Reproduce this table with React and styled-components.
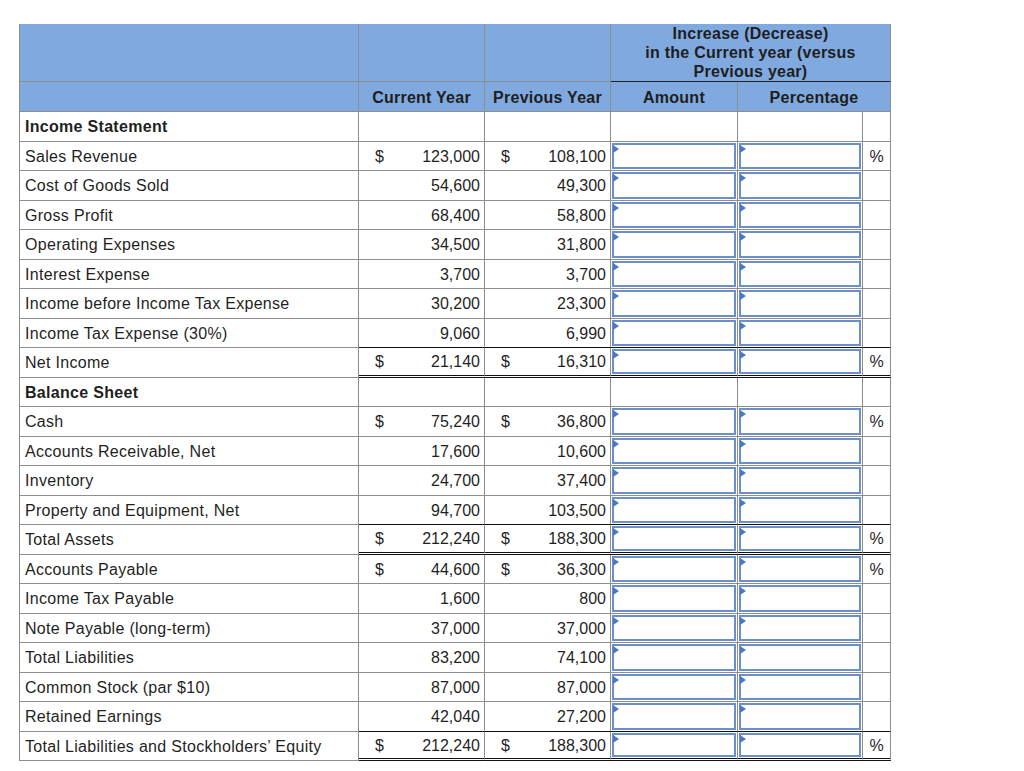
import React from "react";
import styled, { createGlobalStyle, css } from "styled-components";

const Global = createGlobalStyle`
  * { box-sizing: border-box; }
  html, body { margin: 0; padding: 0; background: #fff; }
  body { font-family: "Liberation Sans", Arial, Helvetica, sans-serif; color: #1f1f1f; }
`;

const COLS = "339px 126px 126px 127px 125px 28px";
const GRID = "#8e8e8e";
const HEAD = "#80aadf";
const BLUE = "#6a8fcb";

const Page = styled.div`
  padding: 24px 0 0 19px;
  width: 1024px;
  height: 771px;
`;

const Sheet = styled.div`
  width: 872px;
  border-left: 1px solid ${GRID};
`;

const Row = styled.div`
  display: grid;
  grid-template-columns: ${COLS};
  height: ${(p) => p.$h}px;
`;

const Cell = styled.div`
  border-right: 1px solid ${GRID};
  border-bottom: 1px solid ${GRID};
  display: flex;
  align-items: center;
  font-size: 16px;
  padding-top: 2px;
  min-width: 0;
  ${(p) => p.$span && css`grid-column: span ${p.$span};`}
  ${(p) =>
    p.$line === "single" &&
    css`
      border-bottom: 1px solid #111;
    `}
  ${(p) =>
    p.$line === "double" &&
    css`
      border-bottom: 3px double #111;
    `}
`;

const HeadCell = styled(Cell)`
  background: ${HEAD};
  font-weight: bold;
  justify-content: center;
  text-align: center;
  line-height: 19px;
  letter-spacing: 0.25px;
  color: #1e1e1e;
  ${(p) =>
    p.$dark &&
    css`
      border-bottom: 1px solid #222;
      padding-top: 0;
    `}
`;

const LabelCell = styled(Cell)`
  padding-left: 5px;
  font-weight: ${(p) => (p.$bold ? "bold" : "normal")};
  letter-spacing: 0.3px;
  white-space: nowrap;
`;

const MoneyCell = styled(Cell)`
  justify-content: space-between;
  padding: 2px 4px 0 16px;
`;

const InputCell = styled(Cell)`
  padding: 1px;
  align-items: stretch;
`;

const Box = styled.div`
  position: relative;
  flex: 1;
  border: 2px solid ${BLUE};
  background: #fff;
  &::before {
    content: "";
    position: absolute;
    left: -1px;
    top: 0;
    width: 0;
    height: 0;
    border-top: 4px solid transparent;
    border-bottom: 4px solid transparent;
    border-left: 6px solid #4a78c4;
  }
`;

const PctCell = styled(Cell)`
  justify-content: center;
`;

const rows = [
  { label: "Income Statement", section: true },
  { label: "Sales Revenue", cy: "123,000", py: "108,100", d: true },
  { label: "Cost of Goods Sold", cy: "54,600", py: "49,300" },
  { label: "Gross Profit", cy: "68,400", py: "58,800" },
  { label: "Operating Expenses", cy: "34,500", py: "31,800" },
  { label: "Interest Expense", cy: "3,700", py: "3,700" },
  { label: "Income before Income Tax Expense", cy: "30,200", py: "23,300" },
  { label: "Income Tax Expense (30%)", cy: "9,060", py: "6,990", line: "single" },
  { label: "Net Income", cy: "21,140", py: "16,310", d: true, line: "double" },
  { label: "Balance Sheet", section: true },
  { label: "Cash", cy: "75,240", py: "36,800", d: true },
  { label: "Accounts Receivable, Net", cy: "17,600", py: "10,600" },
  { label: "Inventory", cy: "24,700", py: "37,400" },
  { label: "Property and Equipment, Net", cy: "94,700", py: "103,500", line: "single" },
  { label: "Total Assets", cy: "212,240", py: "188,300", d: true, line: "double" },
  { label: "Accounts Payable", cy: "44,600", py: "36,300", d: true },
  { label: "Income Tax Payable", cy: "1,600", py: "800" },
  { label: "Note Payable (long-term)", cy: "37,000", py: "37,000" },
  { label: "Total Liabilities", cy: "83,200", py: "74,100" },
  { label: "Common Stock (par $10)", cy: "87,000", py: "87,000" },
  { label: "Retained Earnings", cy: "42,040", py: "27,200", line: "single" },
  { label: "Total Liabilities and Stockholders’ Equity", cy: "212,240", py: "188,300", d: true, line: "double" },
];

export default function App() {
  return (
    <>
      <Global />
      <Page>
        <Sheet>
          <Row $h={58}>
            <HeadCell />
            <HeadCell />
            <HeadCell />
            <HeadCell $span={3} $dark>
              Increase (Decrease)
              <br />
              in the Current year (versus
              <br />
              Previous year)
            </HeadCell>
          </Row>
          <Row $h={30}>
            <HeadCell />
            <HeadCell>Current Year</HeadCell>
            <HeadCell>Previous Year</HeadCell>
            <HeadCell>Amount</HeadCell>
            <HeadCell $span={2}>Percentage</HeadCell>
          </Row>
          {rows.map((r) =>
            r.section ? (
              <Row $h={29.5} key={r.label}>
                <LabelCell $bold>{r.label}</LabelCell>
                <Cell />
                <Cell />
                <Cell />
                <Cell />
                <Cell />
              </Row>
            ) : (
              <Row $h={29.5} key={r.label}>
                <LabelCell>{r.label}</LabelCell>
                <MoneyCell $line={r.line}>
                  <span>{r.d ? "$" : ""}</span>
                  <span>{r.cy}</span>
                </MoneyCell>
                <MoneyCell $line={r.line}>
                  <span>{r.d ? "$" : ""}</span>
                  <span>{r.py}</span>
                </MoneyCell>
                <InputCell $line={r.line}>
                  <Box />
                </InputCell>
                <InputCell $line={r.line}>
                  <Box />
                </InputCell>
                <PctCell $line={r.line}>{r.d ? "%" : ""}</PctCell>
              </Row>
            )
          )}
        </Sheet>
      </Page>
    </>
  );
}
